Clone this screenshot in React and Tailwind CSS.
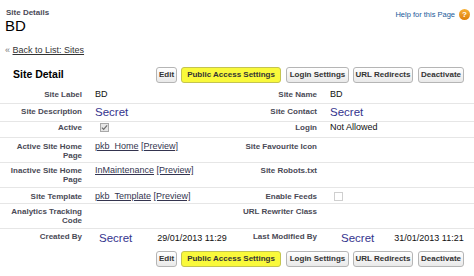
import React from "react";

const buttons = [
  { label: "Edit", w: "w-[21px]", ml: "ml-0" },
  { label: "Public Access Settings", w: "w-[100px]", ml: "ml-[4px]", yellow: true },
  { label: "Login Settings", w: "w-[63px]", ml: "ml-[5px]" },
  { label: "URL Redirects", w: "w-[60px]", ml: "ml-[4px]" },
  { label: "Deactivate", w: "w-[46px]", ml: "ml-[5px]" },
];

function ButtonRow() {
  return (
    <div className="flex items-center">
      {buttons.map((b) => (
        <button
          key={b.label}
          className={`${b.w} ${b.ml} h-[16px] rounded-[3px] border text-[8px] font-bold leading-none text-[#333] whitespace-nowrap ${
            b.yellow
              ? "bg-[#f9f93b] border-[#c4c450]"
              : "bg-gradient-to-b from-white to-[#e9e9e9] border-[#b5b5b5]"
          }`}
        >
          {b.label}
        </button>
      ))}
    </div>
  );
}

function Label({ children, pt }) {
  return (
    <div className={`pl-[2px] pr-[2px] text-right text-[8px] font-bold leading-[9px] text-[#4a4a56] ${pt}`}>
      {children}
    </div>
  );
}

function Value({ children, pt, className = "" }) {
  return (
    <div className={`pl-[11px] text-[9px] leading-[9px] text-[#111] ${pt} ${className}`}>
      {children}
    </div>
  );
}

function Row({ h, border = true, children }) {
  return (
    <div
      className={`grid grid-cols-[84px_151px_84px_1fr] ${h} ${
        border ? "border-b border-[#e6e6e6]" : ""
      }`}
    >
      {children}
    </div>
  );
}

function Secret() {
  return <span className="text-[11.5px] leading-[14px] text-[#34348e]">Secret</span>;
}

function Link({ children }) {
  return <span className="underline text-[#34344f]">{children}</span>;
}

function CheckedBox() {
  return (
    <span className="ml-[5px] flex h-[9px] w-[9px] items-center justify-center border border-[#a8a8a8] bg-[#e6e6e6]">
      <svg viewBox="0 0 8 8" className="h-[7px] w-[7px]">
        <path d="M1 4.2 L3 6.2 L7 1.5" fill="none" stroke="#6e6e6e" strokeWidth="1.4" />
      </svg>
    </span>
  );
}

export default function App() {
  return (
    <div className="h-[276px] w-[474px] overflow-hidden bg-white font-['Liberation_Sans',Arial,sans-serif]">
      <div className="flex items-start justify-between">
        <div className="pl-[5px] pt-[8px]">
          <div className="ml-[1px] text-[8px] font-bold leading-[10px] text-[#4a4a56]">Site Details</div>
          <div className="text-[15px] leading-[16px] text-black">BD</div>
        </div>
        <div className="flex items-center pr-[4px] pt-[9px]">
          <span className="text-[7.5px] leading-[10px] text-[#1a5a9a]">Help for this Page</span>
          <span className="ml-[4px] flex h-[11px] w-[11px] items-center justify-center rounded-full bg-gradient-to-b from-[#f7b034] to-[#de7f06] text-[8px] font-bold leading-none text-white">
            ?
          </span>
        </div>
      </div>

      <div className="mt-[11px] pl-[5px] text-[9px] leading-[11px] text-[#333]">
        <span className="text-[#777]">«</span> <span className="underline">Back to List: Sites</span>
      </div>

      <div className="mt-[10px] flex h-[18px] items-center">
        <div className="w-[156px] pl-[13px] text-[10.5px] font-bold text-black">Site Detail</div>
        <ButtonRow />
      </div>

      <div className="mt-[3px]">
        <Row h="h-[17px]">
          <Label pt="pt-[3px]">Site Label</Label>
          <Value pt="pt-[3px]">BD</Value>
          <Label pt="pt-[3px]">Site Name</Label>
          <Value pt="pt-[3px]">BD</Value>
        </Row>
        <Row h="h-[18px]">
          <Label pt="pt-[3px]">Site Description</Label>
          <Value pt="pt-[1px]">
            <Secret />
          </Value>
          <Label pt="pt-[3px]">Site Contact</Label>
          <Value pt="pt-[1px]">
            <Secret />
          </Value>
        </Row>
        <Row h="h-[16px]">
          <Label pt="pt-[1px]">Active</Label>
          <Value pt="pt-[1px]" className="flex">
            <CheckedBox />
          </Value>
          <Label pt="pt-[1px]">Login</Label>
          <Value pt="pt-[1px]">Not Allowed</Value>
        </Row>
        <Row h="h-[25px]">
          <Label pt="pt-[4px]">Active Site Home Page</Label>
          <Value pt="pt-[4px]">
            <Link>pkb_Home</Link> <Link>[Preview]</Link>
          </Value>
          <Label pt="pt-[4px]">Site Favourite Icon</Label>
          <Value pt="pt-[4px]"></Value>
        </Row>
        <Row h="h-[25px]">
          <Label pt="pt-[3px]">Inactive Site Home Page</Label>
          <Value pt="pt-[3px]">
            <Link>InMaintenance</Link> <Link>[Preview]</Link>
          </Value>
          <Label pt="pt-[3px]">Site Robots.txt</Label>
          <Value pt="pt-[3px]"></Value>
        </Row>
        <Row h="h-[16px]">
          <Label pt="pt-[4px]">Site Template</Label>
          <Value pt="pt-[4px]">
            <Link>pkb_Template</Link> <Link>[Preview]</Link>
          </Value>
          <Label pt="pt-[4px]">Enable Feeds</Label>
          <Value pt="pt-[4px]" className="flex">
            <span className="ml-[4px] h-[9px] w-[9px] border border-[#cfcfcf] bg-white"></span>
          </Value>
        </Row>
        <Row h="h-[25px]">
          <Label pt="pt-[3px]">Analytics Tracking Code</Label>
          <Value pt="pt-[3px]"></Value>
          <Label pt="pt-[3px]">URL Rewriter Class</Label>
          <Value pt="pt-[3px]"></Value>
        </Row>
        <Row h="h-[17px]" border={false}>
          <Label pt="pt-[3px]">Created By</Label>
          <Value pt="pt-[1px]" className="flex items-center">
            <span className="ml-[4px]">
              <Secret />
            </span>
            <span className="ml-[25px]">29/01/2013 11:29</span>
          </Value>
          <Label pt="pt-[3px]">Last Modified By</Label>
          <Value pt="pt-[1px]" className="flex items-center">
            <span className="ml-[11px]">
              <Secret />
            </span>
            <span className="ml-[20px]">31/01/2013 11:21</span>
          </Value>
        </Row>
      </div>

      <div className="mt-[5px] pl-[156px]">
        <ButtonRow />
      </div>
    </div>
  );
}
